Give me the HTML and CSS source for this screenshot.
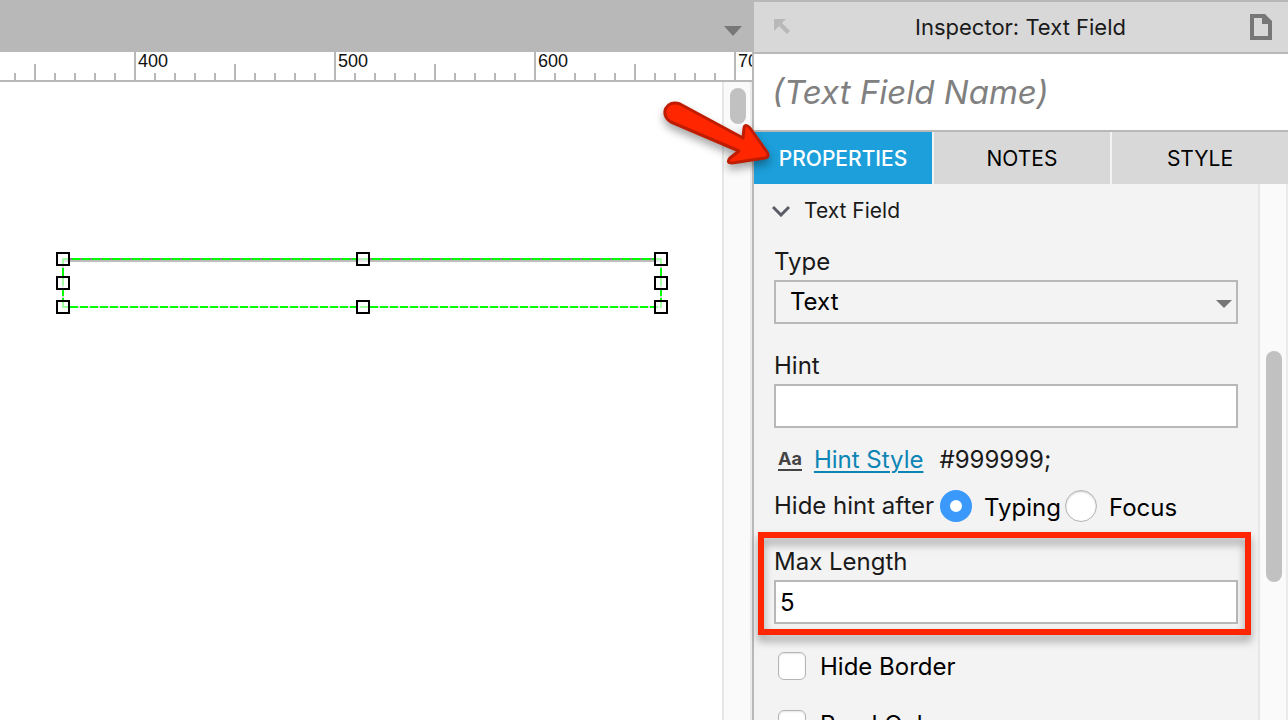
FILE: index.html
```
<!DOCTYPE html>
<html lang="en">
<head>
    <meta charset="utf-8">
    <title>Inspector: Text Field</title>
    <link rel="stylesheet" href="styles.css">
</head>
<body>
    <div class="app">
        <main class="workspace">
            <div class="toolbar">
                <button class="menu-button" aria-label="Open pages"></button>
            </div>
            <div class="ruler">
                <div class="segment"></div>
                <div class="segment">400</div>
                <div class="segment">500</div>
                <div class="segment">600</div>
                <div class="segment">700</div>
            </div>
            <div class="canvas">
                <div class="design">
                    <!-- selected text field with its resize handles -->
                    <svg class="selection" width="612" height="62" viewBox="0 0 612 62">
                        <path d="M6 7H606" stroke="#848484" stroke-width="2"/>
                        <path d="M6 9H606" stroke="#bdbdbd" stroke-width="2"/>
                        <path d="M7 10V55M605 10V55M6 55H606" stroke="#d8d8d8" stroke-width="2"/>
                        <path d="M6 7H606M7 6V56M605 6V56" stroke="#00ff00" stroke-width="2" stroke-dasharray="8 2"/>
                        <path d="M6 55H606" stroke="#00ff00" stroke-width="2" stroke-dasharray="8 2" stroke-dashoffset="2"/>
                        <g fill="#ffffff" fill-opacity="0.65" stroke="#000000" stroke-width="2">
                            <rect x="1" y="1" width="12" height="12"/>
                            <rect x="301" y="1" width="12" height="12"/>
                            <rect x="599" y="1" width="12" height="12"/>
                            <rect x="1" y="25" width="12" height="12"/>
                            <rect x="599" y="25" width="12" height="12"/>
                            <rect x="1" y="49" width="12" height="12"/>
                            <rect x="301" y="49" width="12" height="12"/>
                            <rect x="599" y="49" width="12" height="12"/>
                        </g>
                    </svg>
                </div>
                <div class="scrollbar">
                    <div class="thumb thumb-canvas"></div>
                </div>
            </div>
        </main>

        <aside class="inspector">
            <header class="inspector-header">
                <svg width="18" height="18" viewBox="0 0 18 18">
                    <path d="M1 1H13L9 5L17 13L14 16L6 8L1 13Z" fill="#b8b8b8"/>
                </svg>
                <h1>Inspector: Text Field</h1>
                <svg width="22" height="26" viewBox="0 0 22 26">
                    <path fill="#777777" fill-rule="evenodd" d="M0 0H15L22 7V26H0ZM4 4V22H18V10H12V4Z"/>
                </svg>
            </header>
            <input class="widget-name" type="text" placeholder="(Text Field Name)" aria-label="Text Field Name">
            <nav class="tabs">
                <button class="tab active">PROPERTIES</button>
                <button class="tab">NOTES</button>
                <button class="tab">STYLE</button>
            </nav>

            <div class="panel">
                <div class="properties">
                    <h2>
                        <svg width="18" height="12" viewBox="0 0 18 12">
                            <path d="M1 2L9 10L17 2" fill="none" stroke="#5a5c66" stroke-width="3"/>
                        </svg>
                        Text Field
                    </h2>

                    <div class="field">
                        <label for="type">Type</label>
                        <div class="select-box">
                            <select id="type">
                                <option>Text</option>
                            </select>
                        </div>
                    </div>

                    <div class="field">
                        <label for="hint">Hint</label>
                        <input id="hint" type="text">
                    </div>

                    <div class="hint-style">
                        <span class="aa">Aa</span>
                        <a href="#">Hint Style</a>
                        <span>#999999;</span>
                    </div>

                    <div class="hide-hint">
                        <span>Hide hint after</span>
                        <input type="radio" name="hide" id="typing" checked>
                        <label for="typing">Typing</label>
                        <input type="radio" name="hide" id="focus">
                        <label for="focus">Focus</label>
                    </div>

                    <div class="field highlight">
                        <label for="max-length">Max Length</label>
                        <input id="max-length" type="text" value="5">
                    </div>

                    <div class="check">
                        <input type="checkbox" id="hide-border">
                        <label for="hide-border">Hide Border</label>
                    </div>
                    <div class="check">
                        <input type="checkbox" id="read-only">
                        <label for="read-only">Read Only</label>
                    </div>
                </div>
                <div class="scrollbar">
                    <div class="thumb thumb-panel"></div>
                </div>
            </div>

            <!-- arrow pointing at the properties tab -->
            <svg class="arrow" width="120" height="80" viewBox="0 0 120 80">
                <path d="M28 13L91 47L92 37Q93 32 98 37L115 61Q118 66 113 67L80 72Q74 72 78 67L87 60L19 31C7 24 14 8 28 13Z" fill="#ff2600" stroke="#c01c00" stroke-width="3" stroke-linejoin="round"/>
            </svg>
        </aside>
    </div>
</body>
</html>
```
FILE: styles.css
```
* {
    box-sizing: border-box;
}

body {
    margin: 0;
    font-family: Inter, "Liberation Sans", sans-serif;
    font-size: 24px;
    line-height: 28px;
    color: #1a1a1a;
    background-color: #fff;
}

.app {
    display: flex;
    height: 100vh;
    overflow: hidden;
}

button,
input,
select {
    margin: 0;
    padding: 0;
    border: none;
    border-radius: 0;
    font: inherit;
    color: #000;
}

/* Left side */
.workspace {
    flex: 1;
    min-width: 0;
    display: flex;
    flex-direction: column;
}

.toolbar {
    display: flex;
    justify-content: flex-end;
    align-items: center;
    height: 52px;
    padding: 10px 10px 0 0;
    background-color: #b8b8b8;
}

.menu-button {
    width: 18px;
    height: 10px;
    background-color: #777;
    clip-path: polygon(0 0, 100% 0, 50% 100%);
}

.ruler {
    display: flex;
    height: 30px;
    border-bottom: 2px solid #b8b8b8;
    overflow: hidden;
}

.segment {
    flex: none;
    width: 200px;
    height: 28px;
    padding-left: 4px;
    font-family: "Liberation Sans", Arial, sans-serif;
    font-size: 18px;
    line-height: 18px;
    color: #111;
    background:
        linear-gradient(#b8b8b8, #b8b8b8) 0 0 / 2px 28px no-repeat,
        linear-gradient(#b8b8b8, #b8b8b8) 100px 100% / 2px 16px no-repeat,
        linear-gradient(to right, #b8b8b8 2px, transparent 2px) 0 100% / 20px 7px repeat-x;
}

.segment:first-child {
    margin-left: -66px;
}

.canvas {
    flex: 1;
    display: flex;
}

.design {
    flex: 1;
    position: relative;
}

.selection {
    position: absolute;
    left: 56px;
    top: 170px;
}

.scrollbar {
    flex: none;
    width: 30px;
    padding: 0 6px;
    background-color: #fafafa;
    border-left: 2px solid #e7e7e7;
    border-right: 2px solid #ebebeb;
}

.thumb {
    width: 16px;
    border-radius: 8px;
    background-color: #c1c1c1;
}

.thumb-canvas {
    height: 36px;
    margin-top: 6px;
}

.thumb-panel {
    height: 231px;
    margin-top: 167px;
}

/* Inspector */
.inspector {
    position: relative;
    flex: none;
    width: 536px;
    display: flex;
    flex-direction: column;
    border-left: 2px solid #b8b8b8;
    background-color: #f3f3f3;
}

.inspector-header {
    display: flex;
    align-items: center;
    justify-content: space-between;
    height: 54px;
    padding: 0 16px 0 19px;
    background-color: #d8d8d8;
    border-top: 2px solid #b8b8b8;
    border-bottom: 2px solid #b8b8b8;
}

h1,
h2 {
    margin: 0;
    font-size: 22px;
    font-weight: normal;
}

.widget-name {
    flex: none;
    width: 100%;
    height: 78px;
    padding: 0 18px;
    font-size: 33px;
    font-style: italic;
    background-color: #fff;
    border-bottom: 2px solid #b8b8b8;
}

.widget-name::placeholder {
    color: #808080;
    opacity: 1;
}

.tabs {
    flex: none;
    display: grid;
    grid-template-columns: 180fr 178fr 176fr;
    height: 52px;
}

.tab {
    padding-top: 2px;
    font-size: 21px;
    background-color: #d8d8d8;
    border-right: 2px solid #f3f3f3;
}

.tab:last-child {
    border-right: none;
}

.tab.active {
    color: #fff;
    font-weight: 500;
    background-color: #1c9fda;
    background-clip: padding-box;
}

.panel {
    flex: 1;
    min-height: 0;
    display: flex;
}

.properties {
    flex: 1;
    padding: 0 20px;
}

h2 {
    display: flex;
    align-items: center;
    gap: 14px;
    margin: 13px 0 23px -2px;
    font-size: 21px;
}

.field {
    margin-bottom: 28px;
}

.field label {
    display: block;
    margin-bottom: 4px;
}

.field input,
.field select {
    display: block;
    width: 100%;
    height: 44px;
    border: 2px solid #b8b8b8;
}

.field input {
    padding: 0 4px;
    background-color: #fff;
}

.field select {
    padding: 0 14px;
    appearance: none;
    background-color: #f3f3f3;
}

.select-box {
    position: relative;
}

.select-box::after {
    content: "";
    position: absolute;
    right: 6px;
    top: 20px;
    width: 16px;
    height: 8px;
    background-color: #777;
    clip-path: polygon(0 0, 100% 0, 50% 100%);
    pointer-events: none;
}

.hint-style {
    display: flex;
    align-items: center;
    margin: -10px 0 16px 4px;
}

.hint-style a {
    margin: 0 16px 0 12px;
    color: #0c84b5;
    text-decoration-thickness: 2px;
    text-underline-offset: 3px;
}

.aa {
    font-size: 18px;
    font-weight: bold;
    line-height: 20px;
    color: #444;
    border-bottom: 2px solid #444;
}

.hide-hint {
    display: flex;
    align-items: center;
    margin-bottom: 26px;
    white-space: nowrap;
}

.hide-hint label {
    margin: 4px 4px 0 12px;
    color: #000;
}

input[type="radio"] {
    flex: none;
    width: 32px;
    height: 32px;
    appearance: none;
    border: 1px solid #b4b4b4;
    border-radius: 50%;
    background-color: #fff;
    box-shadow: inset 0 1px 2px rgba(0, 0, 0, 0.2);
}

input[type="radio"]:checked {
    border: 10px solid #3b99fc;
    box-shadow: none;
}

.hide-hint span {
    margin-right: 6px;
}

.highlight {
    position: relative;
}

/* red box round the field */
.highlight::after {
    content: "";
    position: absolute;
    inset: -16px -13px -11px -16px;
    border: 6px solid #ff2600;
    filter: drop-shadow(0 6px 4px rgba(0, 0, 0, 0.35));
    pointer-events: none;
}

.check {
    display: flex;
    align-items: center;
    gap: 14px;
    margin: 0 0 30px 4px;
    height: 28px;
    color: #000;
}

.check label {
    padding-top: 2px;
}

input[type="checkbox"] {
    width: 28px;
    height: 28px;
    appearance: none;
    border: 1px solid #b4b4b4;
    border-radius: 6px;
    background-color: #fff;
    box-shadow: inset 0 1px 2px rgba(0, 0, 0, 0.1);
}

.arrow {
    position: absolute;
    left: -102px;
    top: 91px;
    filter: drop-shadow(0 5px 4px rgba(0, 0, 0, 0.35));
    overflow: visible;
    pointer-events: none;
}
```
